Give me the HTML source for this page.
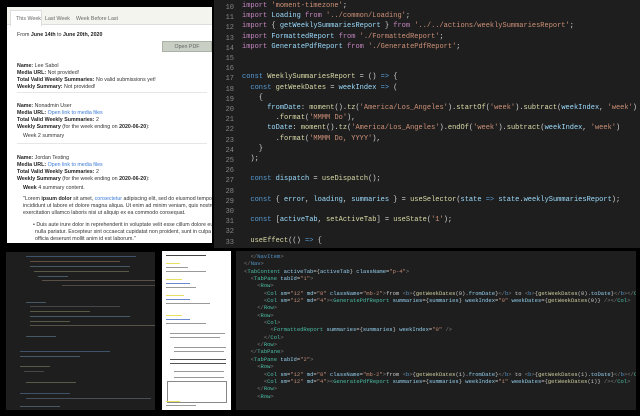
<!DOCTYPE html>
<html><head><meta charset="utf-8">
<style>
*{margin:0;padding:0;box-sizing:border-box}
body{width:640px;height:416px;background:#000;position:relative;overflow:hidden;font-family:"Liberation Sans",sans-serif}
.a{position:absolute;white-space:nowrap}
#tl{position:absolute;left:7px;top:7px;width:205px;height:236px;background:#fff;overflow:hidden;font-size:5.3px;color:#333}
#tl .a{line-height:7px}
b{font-weight:bold;color:#222}
.lk{color:#3a7bd5}
#tr{position:absolute;left:214px;top:0;width:426px;height:248px;background:#1e1e1e;overflow:hidden}
.ln{position:absolute;left:4px;width:16px;text-align:right;color:#858585;font:7px "Liberation Mono",monospace}
.cd{position:absolute;left:28px;font:7px/10.2px "Liberation Mono",monospace;color:#d4d4d4;white-space:pre}
.k{color:#569cd6}.i{color:#c586c0}.s{color:#ce9178}.v{color:#9cdcfe}.f{color:#dcdcaa}.t{color:#4ec9b0}.g{color:#808080}
#br{position:absolute;left:236px;top:251px;width:400px;height:159px;background:#1e1e1e;overflow:hidden}
.cd2{position:absolute;left:8px;top:2px;font:5.5px/7.35px "Liberation Mono",monospace;color:#d4d4d4;white-space:pre;opacity:.92}
#bl{position:absolute;left:6px;top:252px;width:149px;height:158px;background:#1e1e1e;overflow:hidden}
#bl i{position:absolute;height:1px;display:block;opacity:.55}
#doc{position:absolute;left:162px;top:251px;width:69px;height:159px;background:#fff;overflow:hidden}
#doc i{position:absolute;height:1px;display:block;background:#999}
</style></head><body>

<div id="tl">
 <div class="a" style="left:0;top:0;width:205px;height:18px;background:#f4f4ef;border-bottom:1px solid #ddd"></div>
 <div class="a" style="left:3px;top:3px;width:32px;height:16px;background:#fff;border:1px solid #ddd;border-bottom:none"></div>
 <div class="a" style="left:9px;top:9px;color:#666">This Week</div>
 <div class="a" style="left:38px;top:9px;color:#666">Last Week</div>
 <div class="a" style="left:69px;top:9px;color:#666">Week Before Last</div>
 <div class="a" style="left:10px;top:25px">From <b>June 14th</b> to <b>June 20th, 2020</b></div>
 <div class="a" style="left:155px;top:34px;width:50px;height:11px;background:#c9cfc4;border:1px solid #aab2a5;color:#666;text-align:center;line-height:10px!important">Open PDF</div>
 <div class="a" style="left:10px;top:56px"><b>Name:</b> Lee Sabol</div>
 <div class="a" style="left:10px;top:63px"><b>Media URL:</b> Not provided!</div>
 <div class="a" style="left:10px;top:70px"><b>Total Valid Weekly Summaries:</b> No valid submissions yet!</div>
 <div class="a" style="left:10px;top:77px"><b>Weekly Summary:</b> Not provided!</div>
 <div class="a" style="left:10px;top:85px;width:190px;height:1px;background:#e6e6e6"></div>
 <div class="a" style="left:10px;top:96px"><b>Name:</b> Nonadmin User</div>
 <div class="a" style="left:10px;top:103px"><b>Media URL:</b> <span class="lk">Open link to media files</span></div>
 <div class="a" style="left:10px;top:110px"><b>Total Valid Weekly Summaries:</b> 2</div>
 <div class="a" style="left:10px;top:117px"><b>Weekly Summary</b> (for the week ending on <b>2020-06-20</b>):</div>
 <div class="a" style="left:16px;top:126px">Week 2 summary</div>
 <div class="a" style="left:10px;top:136px;width:190px;height:1px;background:#e6e6e6"></div>
 <div class="a" style="left:10px;top:148px"><b>Name:</b> Jordan Testing</div>
 <div class="a" style="left:10px;top:155px"><b>Media URL:</b> <span class="lk">Open link to media files</span></div>
 <div class="a" style="left:10px;top:162px"><b>Total Valid Weekly Summaries:</b> 2</div>
 <div class="a" style="left:10px;top:169px"><b>Weekly Summary</b> (for the week ending on <b>2020-06-20</b>):</div>
 <div class="a" style="left:16px;top:178px"><b>Week</b> 4 summary content.</div>
 <div class="a" style="left:16px;top:189px">"Lorem <b>ipsum dolor</b> sit amet, <span class="lk">consectetur</span> adipiscing elit, sed do eiusmod tempor</div>
 <div class="a" style="left:16px;top:196px">incididunt ut labore et dolore magna aliqua. Ut enim ad minim veniam, quis nostrud</div>
 <div class="a" style="left:16px;top:203px">exercitation ullamco laboris nisi ut aliquip ex ea commodo consequat.</div>
 <div class="a" style="left:26px;top:215px">• Duis aute irure dolor in reprehenderit in voluptate velit esse cillum dolore eu fugiat</div>
 <div class="a" style="left:28px;top:222px">nulla pariatur. Excepteur sint occaecat cupidatat non proident, sunt in culpa qui</div>
 <div class="a" style="left:28px;top:229px">officia deserunt mollit anim id est laborum."</div>
 <div class="a" style="left:26px;top:236px">• non proident, sunt in culpa qui officia deserunt mollit anim id est laborum.</div>
</div>

<div id="tr">
<div class="ln" style="top:3px;line-height:10.2px">10<br>11<br>12<br>13<br>14<br>15<br>16<br>17<br>18<br>19<br>20<br>21<br>22<br>23<br>24<br>25<br>26<br>27<br>28<br>29<br>30<br>31<br>32<br>33</div>
<div class="cd" style="top:1px"><span class="i">import</span> <span class="s">'moment-timezone'</span>;
<span class="i">import</span> <span class="v">Loading</span> <span class="i">from</span> <span class="s">'../common/Loading'</span>;
<span class="i">import</span> { <span class="v">getWeeklySummariesReport</span> } <span class="i">from</span> <span class="s">'../../actions/weeklySummariesReport'</span>;
<span class="i">import</span> <span class="v">FormattedReport</span> <span class="i">from</span> <span class="s">'./FormattedReport'</span>;
<span class="i">import</span> <span class="v">GeneratePdfReport</span> <span class="i">from</span> <span class="s">'./GeneratePdfReport'</span>;


<span class="k">const</span> <span class="f">WeeklySummariesReport</span> = () <span class="k">=&gt;</span> {
  <span class="k">const</span> <span class="f">getWeekDates</span> = <span class="v">weekIndex</span> <span class="k">=&gt;</span> (
    {
      <span class="v">fromDate</span>: <span class="f">moment</span>().<span class="f">tz</span>(<span class="s">'America/Los_Angeles'</span>).<span class="f">startOf</span>(<span class="s">'week'</span>).<span class="f">subtract</span>(<span class="v">weekIndex</span>, <span class="s">'week'</span>)
        .<span class="f">format</span>(<span class="s">'MMMM Do'</span>),
      <span class="v">toDate</span>: <span class="f">moment</span>().<span class="f">tz</span>(<span class="s">'America/Los_Angeles'</span>).<span class="f">endOf</span>(<span class="s">'week'</span>).<span class="f">subtract</span>(<span class="v">weekIndex</span>, <span class="s">'week'</span>)
        .<span class="f">format</span>(<span class="s">'MMMM Do, YYYY'</span>),
    }
  );

  <span class="k">const</span> <span class="v">dispatch</span> = <span class="f">useDispatch</span>();

  <span class="k">const</span> { <span class="v">error</span>, <span class="v">loading</span>, <span class="v">summaries</span> } = <span class="f">useSelector</span>(<span class="v">state</span> <span class="k">=&gt;</span> <span class="v">state</span>.<span class="v">weeklySummariesReport</span>);

  <span class="k">const</span> [<span class="v">activeTab</span>, <span class="f">setActiveTab</span>] = <span class="f">useState</span>(<span class="s">'1'</span>);

  <span class="f">useEffect</span>(() <span class="k">=&gt;</span> {</div>
</div>

<div id="bl">
<i style="left:20px;top:4px;width:110px;background:#5a7fa8"></i>
<i style="left:24px;top:9px;width:90px;background:#9a7a5a"></i>
<i style="left:24px;top:14px;width:100px;background:#6a8aa0"></i>
<i style="left:28px;top:19px;width:95px;background:#8a8a6a"></i>
<i style="left:32px;top:24px;width:30px;background:#6a8aa0"></i>
<i style="left:36px;top:28px;width:115px;background:#8a7a6a"></i>
<i style="left:56px;top:33px;width:95px;background:#7a6a5a"></i>
<i style="left:20px;top:50px;width:20px;background:#6a8aa0"></i>
<i style="left:24px;top:54px;width:90px;background:#6a6a6a"></i>
<i style="left:24px;top:59px;width:60px;background:#8a8a6a"></i>
<i style="left:24px;top:64px;width:100px;background:#6a8aa0"></i>
<i style="left:24px;top:69px;width:40px;background:#8a8a6a"></i>
<i style="left:24px;top:73px;width:125px;background:#8a7a6a"></i>
<i style="left:20px;top:84px;width:30px;background:#6a8aa0"></i>
<i style="left:14px;top:99px;width:90px;background:#5a7fa8"></i>
<i style="left:14px;top:104px;width:60px;background:#6a8aa0"></i>
<i style="left:14px;top:114px;width:30px;background:#8a8a6a"></i>
<i style="left:18px;top:119px;width:20px;background:#6a6a6a"></i>
<i style="left:20px;top:130px;width:50px;background:#8a8a6a"></i>
<i style="left:14px;top:141px;width:50px;background:#5a7fa8"></i>
<i style="left:20px;top:146px;width:125px;background:#6a7a8a"></i>
<i style="left:14px;top:154px;width:40px;background:#6a8aa0"></i>
</div>

<div id="doc">
<i style="left:4px;top:4px;width:40px;background:#444"></i>
<i style="left:4px;top:12px;width:14px;background:#e8e060"></i>
<i style="left:4px;top:16px;width:22px"></i><i style="left:4px;top:20px;width:40px"></i>
<i style="left:4px;top:28px;width:16px;background:#e8e060"></i>
<i style="left:4px;top:32px;width:24px;background:#6a8ad0"></i><i style="left:4px;top:36px;width:30px"></i>
<i style="left:4px;top:44px;width:18px;background:#e8e060"></i>
<i style="left:4px;top:48px;width:24px;background:#6a8ad0"></i><i style="left:4px;top:52px;width:44px"></i>
<i style="left:4px;top:64px;width:16px;background:#e8e060"></i>
<i style="left:4px;top:68px;width:24px;background:#6a8ad0"></i><i style="left:4px;top:72px;width:40px"></i>
<i style="left:8px;top:82px;width:55px"></i><i style="left:8px;top:86px;width:50px"></i>
<i style="left:12px;top:96px;width:52px"></i><i style="left:12px;top:100px;width:50px"></i>
<i style="left:8px;top:108px;width:56px;background:#555"></i><i style="left:8px;top:112px;width:56px;background:#555"></i>
<i style="left:12px;top:120px;width:50px"></i><i style="left:12px;top:126px;width:50px"></i>
<div style="position:absolute;left:5px;top:130px;width:60px;height:22px;border:1px solid #888"></div>
<i style="left:4px;top:150px;width:14px;background:#e8e060"></i>
<i style="left:4px;top:154px;width:30px"></i>
</div>

<div id="br">
<div class="cd2"><span class="g">  &lt;/</span><span class="k">NavItem</span><span class="g">&gt;</span>
<span class="g">&lt;/</span><span class="k">Nav</span><span class="g">&gt;</span>
<span class="g">&lt;</span><span class="t">TabContent</span> <span class="v">activeTab</span>={<span class="v">activeTab</span>} <span class="v">className</span>=<span class="s">"p-4"</span><span class="g">&gt;</span>
  <span class="g">&lt;</span><span class="t">TabPane</span> <span class="v">tabId</span>=<span class="s">"1"</span><span class="g">&gt;</span>
    <span class="g">&lt;</span><span class="t">Row</span><span class="g">&gt;</span>
      <span class="g">&lt;</span><span class="t">Col</span> <span class="v">sm</span>=<span class="s">"12"</span> <span class="v">md</span>=<span class="s">"8"</span> <span class="v">className</span>=<span class="s">"mb-2"</span><span class="g">&gt;</span>from <span class="g">&lt;</span><span class="k">b</span><span class="g">&gt;</span>{<span class="f">getWeekDates</span>(0).<span class="v">fromDate</span>}<span class="g">&lt;/</span><span class="k">b</span><span class="g">&gt;</span> to <span class="g">&lt;</span><span class="k">b</span><span class="g">&gt;</span>{<span class="f">getWeekDates</span>(0).<span class="v">toDate</span>}<span class="g">&lt;/</span><span class="k">b</span><span class="g">&gt;&lt;/</span><span class="t">Col</span><span class="g">&gt;</span>
      <span class="g">&lt;</span><span class="t">Col</span> <span class="v">sm</span>=<span class="s">"12"</span> <span class="v">md</span>=<span class="s">"4"</span><span class="g">&gt;&lt;</span><span class="t">GeneratePdfReport</span> <span class="v">summaries</span>={<span class="v">summaries</span>} <span class="v">weekIndex</span>=<span class="s">"0"</span> <span class="v">weekDates</span>={<span class="f">getWeekDates</span>(0)} <span class="g">/&gt;&lt;/</span><span class="t">Col</span><span class="g">&gt;</span>
    <span class="g">&lt;/</span><span class="t">Row</span><span class="g">&gt;</span>
    <span class="g">&lt;</span><span class="t">Row</span><span class="g">&gt;</span>
      <span class="g">&lt;</span><span class="t">Col</span><span class="g">&gt;</span>
        <span class="g">&lt;</span><span class="t">FormattedReport</span> <span class="v">summaries</span>={<span class="v">summaries</span>} <span class="v">weekIndex</span>=<span class="s">"0"</span> <span class="g">/&gt;</span>
      <span class="g">&lt;/</span><span class="t">Col</span><span class="g">&gt;</span>
    <span class="g">&lt;/</span><span class="t">Row</span><span class="g">&gt;</span>
  <span class="g">&lt;/</span><span class="t">TabPane</span><span class="g">&gt;</span>
  <span class="g">&lt;</span><span class="t">TabPane</span> <span class="v">tabId</span>=<span class="s">"2"</span><span class="g">&gt;</span>
    <span class="g">&lt;</span><span class="t">Row</span><span class="g">&gt;</span>
      <span class="g">&lt;</span><span class="t">Col</span> <span class="v">sm</span>=<span class="s">"12"</span> <span class="v">md</span>=<span class="s">"8"</span> <span class="v">className</span>=<span class="s">"mb-2"</span><span class="g">&gt;</span>from <span class="g">&lt;</span><span class="k">b</span><span class="g">&gt;</span>{<span class="f">getWeekDates</span>(1).<span class="v">fromDate</span>}<span class="g">&lt;/</span><span class="k">b</span><span class="g">&gt;</span> to <span class="g">&lt;</span><span class="k">b</span><span class="g">&gt;</span>{<span class="f">getWeekDates</span>(1).<span class="v">toDate</span>}<span class="g">&lt;/</span><span class="k">b</span><span class="g">&gt;&lt;/</span><span class="t">Col</span><span class="g">&gt;</span>
      <span class="g">&lt;</span><span class="t">Col</span> <span class="v">sm</span>=<span class="s">"12"</span> <span class="v">md</span>=<span class="s">"4"</span><span class="g">&gt;&lt;</span><span class="t">GeneratePdfReport</span> <span class="v">summaries</span>={<span class="v">summaries</span>} <span class="v">weekIndex</span>=<span class="s">"1"</span> <span class="v">weekDates</span>={<span class="f">getWeekDates</span>(1)} <span class="g">/&gt;&lt;/</span><span class="t">Col</span><span class="g">&gt;</span>
    <span class="g">&lt;/</span><span class="t">Row</span><span class="g">&gt;</span>
    <span class="g">&lt;</span><span class="t">Row</span><span class="g">&gt;</span></div>
</div>
</body></html>
